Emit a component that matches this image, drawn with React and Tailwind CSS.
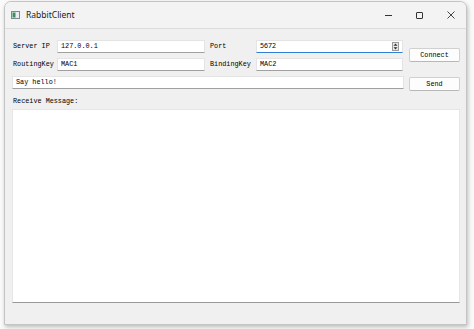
import { useState } from 'react';

const mono = { fontFamily: '"Liberation Mono", "DejaVu Sans Mono", monospace' };

function Field({ value, className = '', focused = false, children, sans = false }) {
  return (
    <div
      className={`flex h-[13px] items-center bg-white pl-[3px] text-[6.8px] text-black border border-[#e4e4e4] ${
        focused ? 'border-b-[#2f7fd6]' : 'border-b-[#a0a0a0]'
      } ${className}`}
      style={sans ? { fontFamily: '"Noto Sans", "Open Sans", sans-serif' } : mono}
    >
      <span className="flex-1 truncate">{value}</span>
      {children}
    </div>
  );
}

function Label({ text, className = '' }) {
  return (
    <div className={`flex h-[13px] items-center text-[6.8px] text-black ${className}`} style={mono}>
      {text}
    </div>
  );
}

function PushButton({ text, className = '' }) {
  return (
    <button
      className={`flex h-[14px] w-[51px] items-center justify-center rounded-[2px] border border-[#d0d0d0] border-b-[#b8b8b8] bg-[#fdfdfd] text-[6.8px] text-black ${className}`}
      style={mono}
    >
      {text}
    </button>
  );
}

export default function App() {
  const [port] = useState('5672');

  return (
    <div className="h-[329px] w-[474px] overflow-hidden bg-[#fafafa]">
      <div className="ml-[4px] mt-[1px] flex h-[324px] w-[463px] flex-col overflow-hidden rounded-t-[7px] border border-[#c4c4c4] bg-[#f0f0f0] shadow-[1px_2px_4px_rgba(0,0,0,0.25)]">
        {/* title bar */}
        <div className="flex h-[27px] shrink-0 items-center border-b border-[#dcdcdc] bg-[#f3f3f3]">
          <svg className="ml-[6px]" width="9" height="8" viewBox="0 0 9 8">
            <rect x="0.5" y="0.5" width="8" height="7" fill="#e9eef2" stroke="#7d8a96" />
            <rect x="1.5" y="1.5" width="3" height="5" fill="#3f8f5a" />
          </svg>
          <span
            className="ml-[6px] text-[8.5px] text-[#1b1b1b]"
            style={{ fontFamily: '"Noto Sans", "Open Sans", sans-serif' }}
          >
            RabbitClient
          </span>
          <div className="ml-auto flex h-full items-center">
            <div className="flex h-full w-[31px] items-center justify-center">
              <div className="h-[1px] w-[7px] bg-[#333]" />
            </div>
            <div className="flex h-full w-[31px] items-center justify-center">
              <div className="h-[7px] w-[7px] rounded-[1px] border border-[#333]" />
            </div>
            <div className="flex h-full w-[31px] items-center justify-center">
              <svg width="8" height="8" viewBox="0 0 8 8">
                <path d="M0.5 0.5 L7.5 7.5 M7.5 0.5 L0.5 7.5" stroke="#333" strokeWidth="0.9" />
              </svg>
            </div>
          </div>
        </div>

        {/* body */}
        <div className="flex flex-1 flex-col pl-[7px] pr-[6px] pt-[11px]">
          <div className="flex gap-[5px]">
            <div className="flex w-[392px] flex-col gap-[5px]">
              <div className="flex">
                <Label text="Server IP" className="w-[45px] pl-[1px]" />
                <Field value="127.0.0.1" className="w-[148px]" />
                <Label text="Port" className="w-[51px] pl-[5px]" />
                <Field value={port} focused sans className="w-[147px] !text-[7px]">
                  <div className="mr-[3px] flex h-[9px] w-[7px] flex-col items-center justify-center border border-[#9a9a9a] bg-[#eaeaea] leading-none">
                    <svg width="5" height="7" viewBox="0 0 5 7">
                      <path d="M2.5 0.5 L4.5 2.8 L0.5 2.8 Z M2.5 6.5 L4.5 4.2 L0.5 4.2 Z" fill="#333" />
                    </svg>
                  </div>
                </Field>
              </div>
              <div className="flex">
                <Label text="RoutingKey" className="w-[45px] pl-[1px]" />
                <Field value="MAC1" className="w-[148px]" />
                <Label text="BindingKey" className="w-[51px] pl-[5px]" />
                <Field value="MAC2" className="w-[147px]" />
              </div>
              <Field value="Say hello!" className="w-[392px]" />
            </div>
            <div className="flex flex-col pt-[8px]">
              <PushButton text="Connect" />
              <PushButton text="Send" className="mt-[15px]" />
            </div>
          </div>

          <Label text="Receive Message:" className="mt-[3px] h-[14px] pl-[1px]" />
          <div className="mt-[1px] h-[194px] w-[448px] border border-[#e6e6e6] border-b-[#9a9a9a] bg-white" />
        </div>
      </div>
    </div>
  );
}
